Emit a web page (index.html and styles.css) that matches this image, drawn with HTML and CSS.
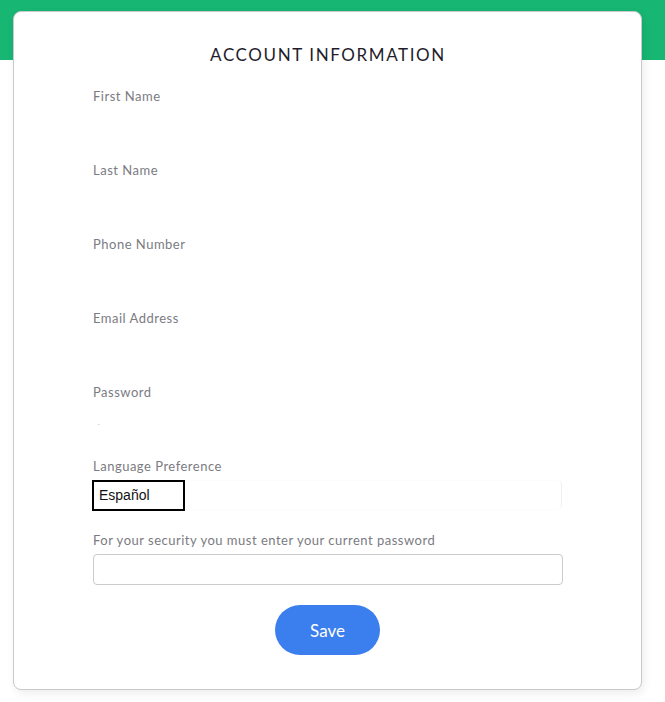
FILE: index.html
```html
<!DOCTYPE html>
<html lang="en">
<head>
<meta charset="utf-8">
<title>Account Information</title>
<link rel="stylesheet" href="styles.css">
</head>
<body>
<div class="page">
  <div class="card">
    <h1 class="title">ACCOUNT INFORMATION</h1>
    <form class="form">
      <div class="field">
        <label class="label">First Name</label>
        <input class="plain" type="text">
      </div>
      <div class="field">
        <label class="label">Last Name</label>
        <input class="plain" type="text">
      </div>
      <div class="field">
        <label class="label">Phone Number</label>
        <input class="plain" type="text">
      </div>
      <div class="field">
        <label class="label">Email Address</label>
        <input class="plain" type="text">
      </div>
      <div class="field">
        <label class="label">Password</label>
        <input class="plain pw" type="password" value="a">
      </div>
      <div class="field">
        <label class="label">Language Preference</label>
        <div class="select-wrap">
          <span class="select-box">Español</span>
        </div>
      </div>
      <div class="field">
        <label class="label">For your security you must enter your current password</label>
        <input class="boxed" type="password">
      </div>
      <div class="actions">
        <button type="button" class="save">Save</button>
      </div>
    </form>
  </div>
</div>
</body>
</html>
```
FILE: styles.css
```css
html, body {
  margin: 0;
  padding: 0;
  background: #ffffff;
}
.page {
  width: 665px;
  height: 702px;
  background: linear-gradient(to bottom, #17b673 0, #17b673 60px, #ffffff 60px);
  padding: 11px 0 0 13px;
  box-sizing: border-box;
  overflow: hidden;
}
.card {
  width: 629px;
  height: 679px;
  box-sizing: border-box;
  background: #fff;
  border: 1px solid #c9c9cc;
  border-radius: 8px;
  box-shadow: 2px 3px 8px rgba(0,0,0,0.08);
  padding: 32px 78px 0 79px;
}
.title {
  margin: 0;
  height: 22px;
  line-height: 22px;
  text-align: center;
  font-family: Lato, "Open Sans", sans-serif;
  font-weight: 400;
  font-size: 17px;
  letter-spacing: 1.6px;
  color: #1f1d2c;
}
.form {
  margin-top: 21px;
  display: flex;
  flex-direction: column;
}
.field {
  display: flex;
  flex-direction: column;
  height: 74px;
}
.label {
  display: block;
  height: 18px;
  line-height: 18px;
  font-family: Lato, "Open Sans", sans-serif;
  font-size: 13px;
  letter-spacing: 0.5px;
  color: #7b7b82;
  margin-bottom: 5px;
}
.plain {
  width: 470px;
  height: 30px;
  box-sizing: border-box;
  border: none;
  outline: none;
  background: #fff;
  padding: 0 5px;
  margin: 0;
}
.pw {
  font-size: 4px;
  color: #b5b5b5;
  padding-top: 7px;
}
.select-wrap {
  width: 470px;
  height: 30px;
  box-sizing: border-box;
  border: 1px solid #fcfcfc;
  border-right-color: #f0f0f0;
  border-radius: 5px;
  display: flex;
  margin-left: -1px;
}
.select-box {
  width: 93px;
  height: 31px;
  box-sizing: border-box;
  border: 2px solid #000;
  margin: -1px 0 0 -1px;
  padding-left: 5px;
  font-family: "Liberation Sans", Arial, sans-serif;
  font-size: 14px;
  line-height: 27px;
  color: #111;
}
.boxed {
  width: 470px;
  height: 31px;
  box-sizing: border-box;
  border: 1px solid #cbcbcf;
  border-radius: 4px;
  background: #fff;
  margin: 0;
  padding: 0 8px;
  outline: none;
}
.actions {
  display: flex;
  justify-content: center;
  margin-top: 0;
}
.save {
  width: 105px;
  height: 50px;
  border: none;
  border-radius: 25px;
  background: #3b7eee;
  color: #fff;
  font-family: Lato, "Open Sans", sans-serif;
  font-size: 17px;
  padding: 0;
  margin-left: -1px;
}
```
